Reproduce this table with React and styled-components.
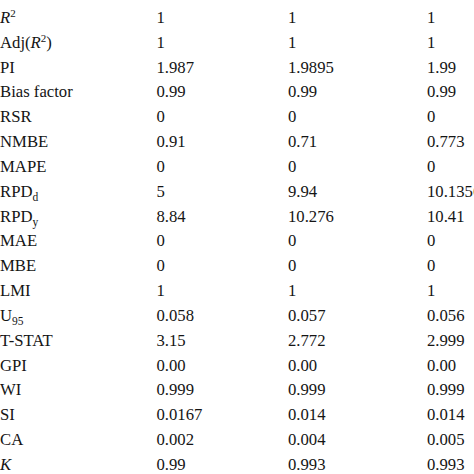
import React from "react";
import styled, { createGlobalStyle } from "styled-components";

const Global = createGlobalStyle`
  html, body { margin: 0; padding: 0; background: #fff; overflow: hidden; }
  body { width: 474px; height: 474px; }
`;

const Table = styled.div`
  display: grid;
  grid-template-columns: 156.5px 131.5px 139px 60px;
  grid-auto-rows: 24.83px;
  padding-top: 6px;
  font-family: "Liberation Serif", "Times New Roman", serif;
  font-size: 16.7px;
  line-height: 24.83px;
  color: #151515;
  white-space: nowrap;
  width: 474px;
  overflow: hidden;
`;

const Cell = styled.div`
  overflow: visible;
`;

const Sup = styled.sup`
  font-size: 11px;
  line-height: 0;
  vertical-align: 6px;
  font-style: normal;
`;

const Sub = styled.sub`
  font-size: 11.5px;
  line-height: 0;
  vertical-align: -4px;
`;

const Ital = styled.i`
  font-style: italic;
`;

const rows = [
  [<><Ital>R</Ital><Sup>2</Sup></>, "1", "1", "1"],
  [<>Adj(<Ital>R</Ital><Sup>2</Sup>)</>, "1", "1", "1"],
  ["PI", "1.987", "1.9895", "1.99"],
  ["Bias factor", "0.99", "0.99", "0.99"],
  ["RSR", "0", "0", "0"],
  ["NMBE", "0.91", "0.71", "0.773"],
  ["MAPE", "0", "0", "0"],
  [<>RPD<Sub>d</Sub></>, "5", "9.94", "10.1356"],
  [<>RPD<Sub>y</Sub></>, "8.84", "10.276", "10.41"],
  ["MAE", "0", "0", "0"],
  ["MBE", "0", "0", "0"],
  ["LMI", "1", "1", "1"],
  [<>U<Sub>95</Sub></>, "0.058", "0.057", "0.056"],
  ["T-STAT", "3.15", "2.772", "2.999"],
  ["GPI", "0.00", "0.00", "0.00"],
  ["WI", "0.999", "0.999", "0.999"],
  ["SI", "0.0167", "0.014", "0.014"],
  ["CA", "0.002", "0.004", "0.005"],
  [<Ital>K</Ital>, "0.99", "0.993", "0.993"],
];

export default function App() {
  return (
    <>
      <Global />
      <Table>
        {rows.map((r, i) =>
          r.map((c, j) => <Cell key={`${i}-${j}`}>{c}</Cell>)
        )}
      </Table>
    </>
  );
}
